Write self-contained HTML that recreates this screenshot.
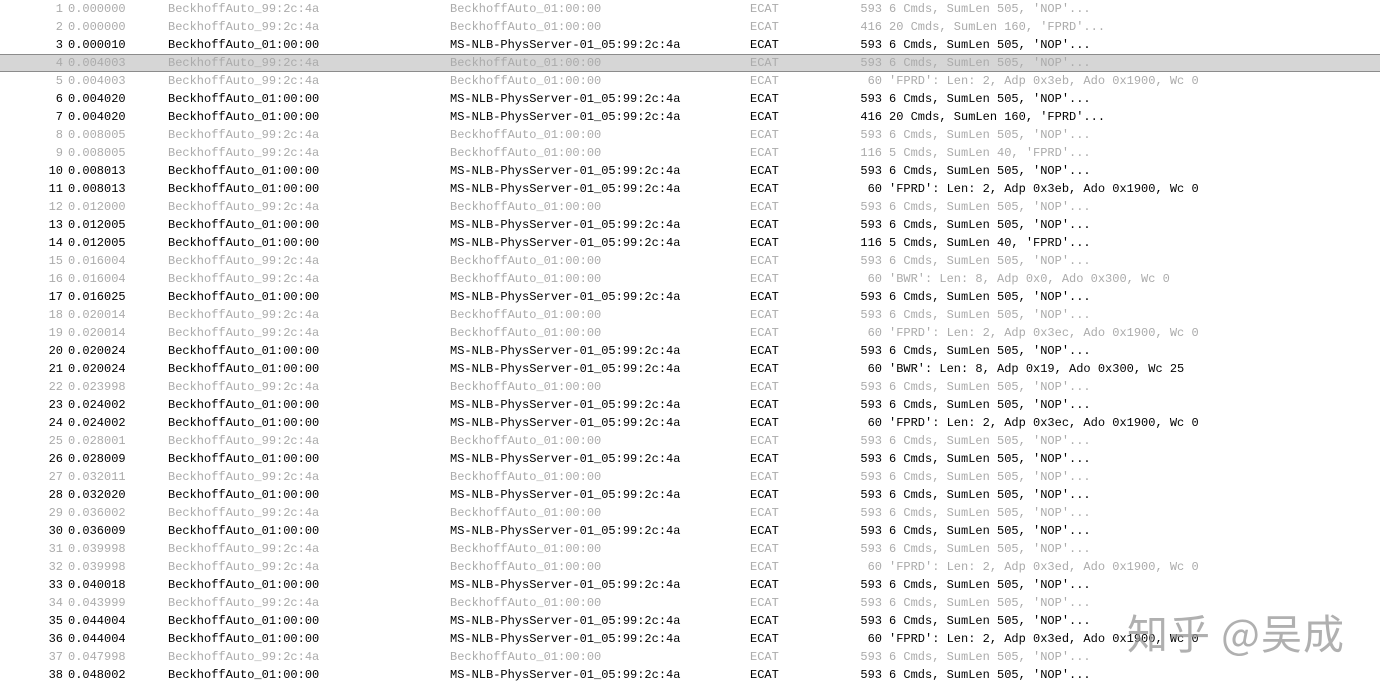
<!DOCTYPE html>
<html><head><meta charset="utf-8"><style>
body{margin:0;width:1380px;height:688px;background:#fff;overflow:hidden;position:relative;font-family:"Liberation Mono",monospace;font-size:12px}
.r{position:absolute;left:0;width:1380px;height:18px;line-height:18px;color:#000;white-space:pre}
.g{color:#ababab}
.s{background:#d6d6d6;border-top:1px solid #8c8c8c;border-bottom:1px solid #8c8c8c;height:16px;line-height:16px}
.r span{position:absolute;top:0}
.n{right:1317px;text-align:right}
.t{left:68px}.a{left:168px}.b{left:450px}.p{left:750px}
.l{right:498px;text-align:right}.i{left:889px}
.wm{position:absolute;left:1127px;top:601px;font-family:"Noto Sans CJK SC",sans-serif;font-size:41px;color:rgba(150,150,150,.75);white-space:nowrap;letter-spacing:1px}
</style></head><body>
<div class="r g" style="top:0"><span class="n">1</span><span class="t">0.000000</span><span class="a">BeckhoffAuto_99:2c:4a</span><span class="b">BeckhoffAuto_01:00:00</span><span class="p">ECAT</span><span class="l">593</span><span class="i">6 Cmds, SumLen 505, 'NOP'...</span></div>
<div class="r g" style="top:18px"><span class="n">2</span><span class="t">0.000000</span><span class="a">BeckhoffAuto_99:2c:4a</span><span class="b">BeckhoffAuto_01:00:00</span><span class="p">ECAT</span><span class="l">416</span><span class="i">20 Cmds, SumLen 160, 'FPRD'...</span></div>
<div class="r" style="top:36px"><span class="n">3</span><span class="t">0.000010</span><span class="a">BeckhoffAuto_01:00:00</span><span class="b">MS-NLB-PhysServer-01_05:99:2c:4a</span><span class="p">ECAT</span><span class="l">593</span><span class="i">6 Cmds, SumLen 505, 'NOP'...</span></div>
<div class="r g s" style="top:54px"><span class="n">4</span><span class="t">0.004003</span><span class="a">BeckhoffAuto_99:2c:4a</span><span class="b">BeckhoffAuto_01:00:00</span><span class="p">ECAT</span><span class="l">593</span><span class="i">6 Cmds, SumLen 505, 'NOP'...</span></div>
<div class="r g" style="top:72px"><span class="n">5</span><span class="t">0.004003</span><span class="a">BeckhoffAuto_99:2c:4a</span><span class="b">BeckhoffAuto_01:00:00</span><span class="p">ECAT</span><span class="l">60</span><span class="i">'FPRD': Len: 2, Adp 0x3eb, Ado 0x1900, Wc 0</span></div>
<div class="r" style="top:90px"><span class="n">6</span><span class="t">0.004020</span><span class="a">BeckhoffAuto_01:00:00</span><span class="b">MS-NLB-PhysServer-01_05:99:2c:4a</span><span class="p">ECAT</span><span class="l">593</span><span class="i">6 Cmds, SumLen 505, 'NOP'...</span></div>
<div class="r" style="top:108px"><span class="n">7</span><span class="t">0.004020</span><span class="a">BeckhoffAuto_01:00:00</span><span class="b">MS-NLB-PhysServer-01_05:99:2c:4a</span><span class="p">ECAT</span><span class="l">416</span><span class="i">20 Cmds, SumLen 160, 'FPRD'...</span></div>
<div class="r g" style="top:126px"><span class="n">8</span><span class="t">0.008005</span><span class="a">BeckhoffAuto_99:2c:4a</span><span class="b">BeckhoffAuto_01:00:00</span><span class="p">ECAT</span><span class="l">593</span><span class="i">6 Cmds, SumLen 505, 'NOP'...</span></div>
<div class="r g" style="top:144px"><span class="n">9</span><span class="t">0.008005</span><span class="a">BeckhoffAuto_99:2c:4a</span><span class="b">BeckhoffAuto_01:00:00</span><span class="p">ECAT</span><span class="l">116</span><span class="i">5 Cmds, SumLen 40, 'FPRD'...</span></div>
<div class="r" style="top:162px"><span class="n">10</span><span class="t">0.008013</span><span class="a">BeckhoffAuto_01:00:00</span><span class="b">MS-NLB-PhysServer-01_05:99:2c:4a</span><span class="p">ECAT</span><span class="l">593</span><span class="i">6 Cmds, SumLen 505, 'NOP'...</span></div>
<div class="r" style="top:180px"><span class="n">11</span><span class="t">0.008013</span><span class="a">BeckhoffAuto_01:00:00</span><span class="b">MS-NLB-PhysServer-01_05:99:2c:4a</span><span class="p">ECAT</span><span class="l">60</span><span class="i">'FPRD': Len: 2, Adp 0x3eb, Ado 0x1900, Wc 0</span></div>
<div class="r g" style="top:198px"><span class="n">12</span><span class="t">0.012000</span><span class="a">BeckhoffAuto_99:2c:4a</span><span class="b">BeckhoffAuto_01:00:00</span><span class="p">ECAT</span><span class="l">593</span><span class="i">6 Cmds, SumLen 505, 'NOP'...</span></div>
<div class="r" style="top:216px"><span class="n">13</span><span class="t">0.012005</span><span class="a">BeckhoffAuto_01:00:00</span><span class="b">MS-NLB-PhysServer-01_05:99:2c:4a</span><span class="p">ECAT</span><span class="l">593</span><span class="i">6 Cmds, SumLen 505, 'NOP'...</span></div>
<div class="r" style="top:234px"><span class="n">14</span><span class="t">0.012005</span><span class="a">BeckhoffAuto_01:00:00</span><span class="b">MS-NLB-PhysServer-01_05:99:2c:4a</span><span class="p">ECAT</span><span class="l">116</span><span class="i">5 Cmds, SumLen 40, 'FPRD'...</span></div>
<div class="r g" style="top:252px"><span class="n">15</span><span class="t">0.016004</span><span class="a">BeckhoffAuto_99:2c:4a</span><span class="b">BeckhoffAuto_01:00:00</span><span class="p">ECAT</span><span class="l">593</span><span class="i">6 Cmds, SumLen 505, 'NOP'...</span></div>
<div class="r g" style="top:270px"><span class="n">16</span><span class="t">0.016004</span><span class="a">BeckhoffAuto_99:2c:4a</span><span class="b">BeckhoffAuto_01:00:00</span><span class="p">ECAT</span><span class="l">60</span><span class="i">'BWR': Len: 8, Adp 0x0, Ado 0x300, Wc 0</span></div>
<div class="r" style="top:288px"><span class="n">17</span><span class="t">0.016025</span><span class="a">BeckhoffAuto_01:00:00</span><span class="b">MS-NLB-PhysServer-01_05:99:2c:4a</span><span class="p">ECAT</span><span class="l">593</span><span class="i">6 Cmds, SumLen 505, 'NOP'...</span></div>
<div class="r g" style="top:306px"><span class="n">18</span><span class="t">0.020014</span><span class="a">BeckhoffAuto_99:2c:4a</span><span class="b">BeckhoffAuto_01:00:00</span><span class="p">ECAT</span><span class="l">593</span><span class="i">6 Cmds, SumLen 505, 'NOP'...</span></div>
<div class="r g" style="top:324px"><span class="n">19</span><span class="t">0.020014</span><span class="a">BeckhoffAuto_99:2c:4a</span><span class="b">BeckhoffAuto_01:00:00</span><span class="p">ECAT</span><span class="l">60</span><span class="i">'FPRD': Len: 2, Adp 0x3ec, Ado 0x1900, Wc 0</span></div>
<div class="r" style="top:342px"><span class="n">20</span><span class="t">0.020024</span><span class="a">BeckhoffAuto_01:00:00</span><span class="b">MS-NLB-PhysServer-01_05:99:2c:4a</span><span class="p">ECAT</span><span class="l">593</span><span class="i">6 Cmds, SumLen 505, 'NOP'...</span></div>
<div class="r" style="top:360px"><span class="n">21</span><span class="t">0.020024</span><span class="a">BeckhoffAuto_01:00:00</span><span class="b">MS-NLB-PhysServer-01_05:99:2c:4a</span><span class="p">ECAT</span><span class="l">60</span><span class="i">'BWR': Len: 8, Adp 0x19, Ado 0x300, Wc 25</span></div>
<div class="r g" style="top:378px"><span class="n">22</span><span class="t">0.023998</span><span class="a">BeckhoffAuto_99:2c:4a</span><span class="b">BeckhoffAuto_01:00:00</span><span class="p">ECAT</span><span class="l">593</span><span class="i">6 Cmds, SumLen 505, 'NOP'...</span></div>
<div class="r" style="top:396px"><span class="n">23</span><span class="t">0.024002</span><span class="a">BeckhoffAuto_01:00:00</span><span class="b">MS-NLB-PhysServer-01_05:99:2c:4a</span><span class="p">ECAT</span><span class="l">593</span><span class="i">6 Cmds, SumLen 505, 'NOP'...</span></div>
<div class="r" style="top:414px"><span class="n">24</span><span class="t">0.024002</span><span class="a">BeckhoffAuto_01:00:00</span><span class="b">MS-NLB-PhysServer-01_05:99:2c:4a</span><span class="p">ECAT</span><span class="l">60</span><span class="i">'FPRD': Len: 2, Adp 0x3ec, Ado 0x1900, Wc 0</span></div>
<div class="r g" style="top:432px"><span class="n">25</span><span class="t">0.028001</span><span class="a">BeckhoffAuto_99:2c:4a</span><span class="b">BeckhoffAuto_01:00:00</span><span class="p">ECAT</span><span class="l">593</span><span class="i">6 Cmds, SumLen 505, 'NOP'...</span></div>
<div class="r" style="top:450px"><span class="n">26</span><span class="t">0.028009</span><span class="a">BeckhoffAuto_01:00:00</span><span class="b">MS-NLB-PhysServer-01_05:99:2c:4a</span><span class="p">ECAT</span><span class="l">593</span><span class="i">6 Cmds, SumLen 505, 'NOP'...</span></div>
<div class="r g" style="top:468px"><span class="n">27</span><span class="t">0.032011</span><span class="a">BeckhoffAuto_99:2c:4a</span><span class="b">BeckhoffAuto_01:00:00</span><span class="p">ECAT</span><span class="l">593</span><span class="i">6 Cmds, SumLen 505, 'NOP'...</span></div>
<div class="r" style="top:486px"><span class="n">28</span><span class="t">0.032020</span><span class="a">BeckhoffAuto_01:00:00</span><span class="b">MS-NLB-PhysServer-01_05:99:2c:4a</span><span class="p">ECAT</span><span class="l">593</span><span class="i">6 Cmds, SumLen 505, 'NOP'...</span></div>
<div class="r g" style="top:504px"><span class="n">29</span><span class="t">0.036002</span><span class="a">BeckhoffAuto_99:2c:4a</span><span class="b">BeckhoffAuto_01:00:00</span><span class="p">ECAT</span><span class="l">593</span><span class="i">6 Cmds, SumLen 505, 'NOP'...</span></div>
<div class="r" style="top:522px"><span class="n">30</span><span class="t">0.036009</span><span class="a">BeckhoffAuto_01:00:00</span><span class="b">MS-NLB-PhysServer-01_05:99:2c:4a</span><span class="p">ECAT</span><span class="l">593</span><span class="i">6 Cmds, SumLen 505, 'NOP'...</span></div>
<div class="r g" style="top:540px"><span class="n">31</span><span class="t">0.039998</span><span class="a">BeckhoffAuto_99:2c:4a</span><span class="b">BeckhoffAuto_01:00:00</span><span class="p">ECAT</span><span class="l">593</span><span class="i">6 Cmds, SumLen 505, 'NOP'...</span></div>
<div class="r g" style="top:558px"><span class="n">32</span><span class="t">0.039998</span><span class="a">BeckhoffAuto_99:2c:4a</span><span class="b">BeckhoffAuto_01:00:00</span><span class="p">ECAT</span><span class="l">60</span><span class="i">'FPRD': Len: 2, Adp 0x3ed, Ado 0x1900, Wc 0</span></div>
<div class="r" style="top:576px"><span class="n">33</span><span class="t">0.040018</span><span class="a">BeckhoffAuto_01:00:00</span><span class="b">MS-NLB-PhysServer-01_05:99:2c:4a</span><span class="p">ECAT</span><span class="l">593</span><span class="i">6 Cmds, SumLen 505, 'NOP'...</span></div>
<div class="r g" style="top:594px"><span class="n">34</span><span class="t">0.043999</span><span class="a">BeckhoffAuto_99:2c:4a</span><span class="b">BeckhoffAuto_01:00:00</span><span class="p">ECAT</span><span class="l">593</span><span class="i">6 Cmds, SumLen 505, 'NOP'...</span></div>
<div class="r" style="top:612px"><span class="n">35</span><span class="t">0.044004</span><span class="a">BeckhoffAuto_01:00:00</span><span class="b">MS-NLB-PhysServer-01_05:99:2c:4a</span><span class="p">ECAT</span><span class="l">593</span><span class="i">6 Cmds, SumLen 505, 'NOP'...</span></div>
<div class="r" style="top:630px"><span class="n">36</span><span class="t">0.044004</span><span class="a">BeckhoffAuto_01:00:00</span><span class="b">MS-NLB-PhysServer-01_05:99:2c:4a</span><span class="p">ECAT</span><span class="l">60</span><span class="i">'FPRD': Len: 2, Adp 0x3ed, Ado 0x1900, Wc 0</span></div>
<div class="r g" style="top:648px"><span class="n">37</span><span class="t">0.047998</span><span class="a">BeckhoffAuto_99:2c:4a</span><span class="b">BeckhoffAuto_01:00:00</span><span class="p">ECAT</span><span class="l">593</span><span class="i">6 Cmds, SumLen 505, 'NOP'...</span></div>
<div class="r" style="top:666px"><span class="n">38</span><span class="t">0.048002</span><span class="a">BeckhoffAuto_01:00:00</span><span class="b">MS-NLB-PhysServer-01_05:99:2c:4a</span><span class="p">ECAT</span><span class="l">593</span><span class="i">6 Cmds, SumLen 505, 'NOP'...</span></div>
<div class="wm">知乎 @吴成</div>
</body></html>
